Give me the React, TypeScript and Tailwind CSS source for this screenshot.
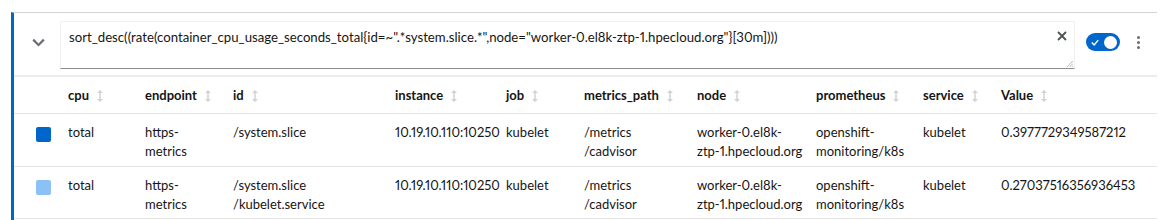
import React from 'react';

const font = { fontFamily: '"Lato", "Liberation Sans", sans-serif' };

const columns = ['cpu', 'endpoint', 'id', 'instance', 'job', 'metrics_path', 'node', 'prometheus', 'service', 'Value'];

const rows = [
  {
    color: 'bg-[#0066cc]',
    h: 'h-[53px]',
    cells: [['total'], ['https-', 'metrics'], ['/system.slice'], ['10.19.10.110:10250'], ['kubelet'], ['/metrics', '/cadvisor'], ['worker-0.el8k-', 'ztp-1.hpecloud.org'], ['openshift-', 'monitoring/k8s'], ['kubelet'], ['0.3977729349587212']],
  },
  {
    color: 'bg-[#8bc1f7]',
    h: 'h-[52px]',
    cells: [['total'], ['https-', 'metrics'], ['/system.slice', '/kubelet.service'], ['10.19.10.110:10250'], ['kubelet'], ['/metrics', '/cadvisor'], ['worker-0.el8k-', 'ztp-1.hpecloud.org'], ['openshift-', 'monitoring/k8s'], ['kubelet'], ['0.27037516356936453']],
  },
];

const grid = 'grid grid-cols-[54px_77px_88px_162px_111px_78px_113px_119px_107px_78px_1fr]';

function SortIcon() {
  return <svg viewBox="0 0 8 16" className="w-[6px] h-[12px] ml-2 text-[#d2d2d2]" fill="currentColor">
    <path d="M4 0 L8 4 H5 V12 H8 L4 16 L0 12 H3 V4 H0 Z" />
  </svg>
}

function Chevron() {
  return <svg viewBox="0 0 16 10" className="w-[13px] h-[9px] text-[#6a6e73]" fill="currentColor">
    <path d="M0.5 2.4 L2.4 0.5 L8 6.1 L13.6 0.5 L15.5 2.4 L8 9.9 Z" />
  </svg>
}

function Toggle() {
  return <div className="w-[34px] h-[18px] rounded-full bg-[#0066cc] flex items-center justify-between px-[3px]">
    <svg viewBox="0 0 10 8" className="w-[8px] h-[7px] ml-[2px]" fill="none" stroke="white" strokeWidth="1.8">
      <path d="M1 4 L4 7 L9 1" />
    </svg>
    <div className="w-[13px] h-[13px] rounded-full bg-white" />
  </div>
}

function Kebab() {
  return <div className="flex flex-col gap-[2px] items-center w-[4px]">
    <div className="w-[3px] h-[3px] rounded-full bg-[#6a6e73]" />
    <div className="w-[3px] h-[3px] rounded-full bg-[#6a6e73]" />
    <div className="w-[3px] h-[3px] rounded-full bg-[#6a6e73]" />
  </div>
}

export default function App() {
  return <div className="w-[1170px] h-[220px] bg-white pt-[12px] pl-[11px] pr-[13px] overflow-hidden text-[#151515] proportional-nums" style={font}>
    <div className="border-l-[3px] border-[#0066cc] border-t border-t-[#d2d2d2] h-full">
      <div className="flex items-start h-[64px] border-b-2 border-[#ececec]">
        <div className="w-[46px] h-[58px] flex items-center justify-center pl-[2px]">
          <Chevron />
        </div>
        <div className="relative shrink-0 mt-[8px] w-[1015px] h-[48px] border border-[#f0f0f0] border-b-[#8a8d90] pl-[8px] pt-[5px] pr-[30px] text-[13.2px] leading-[21px]">
          sort_desc((rate(container_cpu_usage_seconds_total{'{'}id=~".*system.slice.*",node="worker-0.el8k-ztp-1.hpecloud.org"{'}'}[30m])))
          <svg viewBox="0 0 10 10" className="absolute right-[7px] top-[9px] w-[10px] h-[10px]" stroke="#4f5255" strokeWidth="1.8">
            <path d="M1 1 L9 9 M9 1 L1 9" />
          </svg>
          <svg viewBox="0 0 8 8" className="absolute right-[1px] bottom-[1px] w-[7px] h-[7px]" stroke="#9a9a9a" strokeWidth="0.8">
            <path d="M8 1 L1 8 M8 4 L4 8 M8 7 L7 8" />
          </svg>
        </div>
        <div className="flex items-center shrink-0 h-[58px] ml-[11px] gap-[16px]">
          <Toggle />
          <Kebab />
        </div>
      </div>
      <div className={`${grid} h-[37px] pt-[2px] items-center border-b border-[#e4e4e4] text-[13px] font-bold`}>
        <div />
        {columns.map(c => <div key={c} className="flex items-center">{c}<SortIcon /></div>)}
      </div>
      {rows.map((r, i) => <div key={i} className={`${grid} ${r.h} pt-[9px] border-b border-[#e4e4e4] text-[13px] leading-[19px]`}>
        <div className="pl-[22px] pt-[4px]">
          <div className={`w-[15px] h-[15px] rounded-[2px] ${r.color}`} />
        </div>
        {r.cells.map((lines, j) => <div key={j} className="whitespace-nowrap">{lines.map(l => <div key={l}>{l}</div>)}</div>)}
      </div>)}
    </div>
  </div>
}
